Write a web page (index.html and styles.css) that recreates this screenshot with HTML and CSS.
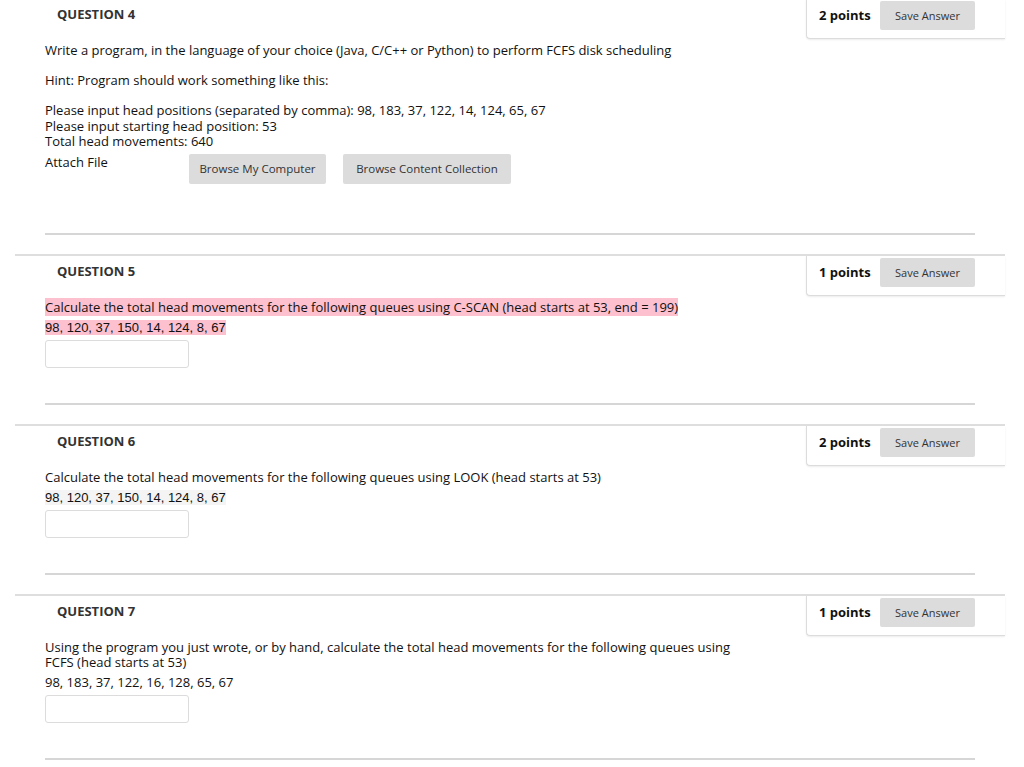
FILE: index.html
```html
<!DOCTYPE html>
<html>
<head>
<meta charset="utf-8">
<link rel="stylesheet" href="styles.css">
</head>
<body>
<div class="quiz">
  <section class="question first">
    <div class="q-head">
      <h3 class="q-title">QUESTION 4</h3>
      <div class="points-box"><span class="points">2 points</span><button class="btn save">Save Answer</button></div>
    </div>
    <div class="q-body">
      <p class="para">Write a program, in the language of your choice (Java, C/C++ or Python) to perform FCFS disk scheduling</p>
      <p class="para">Hint: Program should work something like this:</p>
      <p class="para code">Please input head positions (separated by comma): 98, 183, 37, 122, 14, 124, 65, 67<br>Please input starting head position: 53<br>Total head movements: 640</p>
      <div class="attach">
        <span class="attach-label">Attach File</span>
        <button class="btn browse">Browse My Computer</button>
        <button class="btn browse wide">Browse Content Collection</button>
      </div>
      <div class="sep sep-q4"></div>
    </div>
  </section>

  <section class="question">
    <div class="q-head">
      <h3 class="q-title">QUESTION 5</h3>
      <div class="points-box"><span class="points">1 points</span><button class="btn save">Save Answer</button></div>
    </div>
    <div class="q-body">
      <p class="line"><span class="hl-pink">Calculate the total head movements for the following queues using C-SCAN (head starts at 53, end = 199)</span></p>
      <p class="line"><span class="hl-pink arial">98, 120, 37, 150, 14, 124, 8, 67</span></p>
      <div class="answer"></div>
      <div class="sep"></div>
    </div>
  </section>

  <section class="question">
    <div class="q-head">
      <h3 class="q-title">QUESTION 6</h3>
      <div class="points-box"><span class="points">2 points</span><button class="btn save">Save Answer</button></div>
    </div>
    <div class="q-body">
      <p class="line">Calculate the total head movements for the following queues using LOOK (head starts at 53)</p>
      <p class="line"><span class="hl-grey arial">98, 120, 37, 150, 14, 124, 8, 67</span></p>
      <div class="answer"></div>
      <div class="sep"></div>
    </div>
  </section>

  <section class="question">
    <div class="q-head">
      <h3 class="q-title">QUESTION 7</h3>
      <div class="points-box"><span class="points">1 points</span><button class="btn save">Save Answer</button></div>
    </div>
    <div class="q-body">
      <p class="line narrow">Using the program you just wrote, or by hand, calculate the total head movements for the following queues using FCFS (head starts at 53)</p>
      <p class="line">98, 183, 37, 122, 16, 128, 65, 67</p>
      <div class="answer"></div>
      <div class="sep sep-q7"></div>
    </div>
  </section>
</div>
</body>
</html>
```

FILE: styles.css
```css
html, body {
  margin: 0;
  padding: 0;
  background: #fff;
}

body {
  font-family: "Open Sans", "DejaVu Sans", sans-serif;
  font-size: 13px;
  color: #111;
  overflow: hidden;
}

.quiz {
  margin-top: -3px;
}

.question {
  margin-left: 15px;
  width: 990px;
  border-top: 2px solid #dedede;
}

.q-head {
  display: flex;
  justify-content: space-between;
  align-items: flex-start;
  height: 38px;
}

.q-title {
  margin: 0;
  padding: 7px 0 0 42px;
  font-size: 13px;
  line-height: 16px;
  font-weight: 700;
  color: #333;
}

.points-box {
  box-sizing: border-box;
  width: 199px;
  height: 40px;
  display: flex;
  align-items: flex-start;
  padding: 2px 30px 0 12px;
  border-left: 1px solid #dcdcdc;
  border-bottom: 1px solid #dcdcdc;
  border-bottom-left-radius: 4px;
  box-shadow: 0 1px 2px rgba(0, 0, 0, 0.08);
  background: #fff;
}

.points {
  font-weight: 700;
  font-size: 13px;
  line-height: 16px;
  padding-top: 6px;
  color: #111;
  white-space: nowrap;
}

.btn {
  font-family: "Open Sans", "DejaVu Sans", sans-serif;
  font-size: 11px;
  color: #333;
  background: #dcdcdc;
  border: 0;
  border-radius: 2px;
  padding: 0;
  cursor: pointer;
}

.save {
  margin-left: auto;
  width: 95px;
  height: 29px;
}

.q-body {
  padding: 6px 30px 0 30px;
}

.para {
  margin: 0 0 15px 0;
  line-height: 15px;
}

.code {
  line-height: 15.5px;
  margin-bottom: 4px;
}

.line {
  margin: 0 0 5px 0;
  line-height: 15px;
}

.narrow {
  width: 700px;
}

.hl-pink {
  background: #fcc0ce;
}

.hl-grey {
  background: #f4f4f4;
}

.arial {
  font-family: "Liberation Sans", Arial, sans-serif;
}

.attach {
  display: flex;
  align-items: flex-start;
}

.attach-label {
  width: 144px;
  line-height: 15px;
  padding-top: 1px;
}

.browse {
  width: 137px;
  height: 30px;
  font-size: 11.5px;
}

.browse.wide {
  width: 168px;
  margin-left: 17px;
}

.answer {
  box-sizing: border-box;
  margin-top: 5px;
  width: 144px;
  height: 28px;
  border: 1px solid #dcdcdc;
  border-radius: 3px;
  background: #fff;
}

.sep {
  margin-top: 35px;
  margin-bottom: 19px;
  height: 2px;
  background: #d6d6d6;
}

.sep-q4 {
  margin-top: 49px;
}
```
